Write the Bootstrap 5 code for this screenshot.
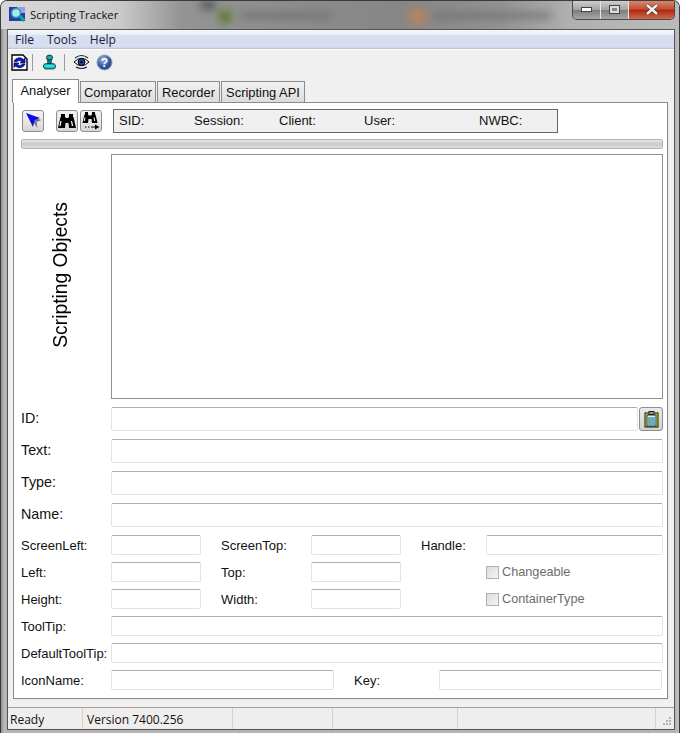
<!DOCTYPE html>
<html lang="en">
<head>
<meta charset="utf-8">
<title>Scripting Tracker</title>
<link href="https://cdn.jsdelivr.net/npm/bootstrap@5.3.0/dist/css/bootstrap.min.css" rel="stylesheet">
<style>
html,body{margin:0;height:733px;width:680px;overflow:hidden;background:#fff}
body{font-family:"Liberation Sans",Arial,sans-serif;font-size:13px;color:#111}
.wnd{width:680px;height:733px;position:relative;overflow:hidden;display:flex;flex-direction:column;background:linear-gradient(90deg,#8e8e8e 0,#b9b9b9 3px,#b4b4b4 6px,#b4b4b4 674px,#c4c4c4 679px);border:1px solid #3b3b3b;border-width:1px 1px 0 1px;border-radius:7px 7px 0 0;padding:0 4px 3px 6px}
.ttl{height:28px;flex:none;display:flex;align-items:center;gap:4px;margin:0 -4px 0 -6px;padding-left:8px;position:relative;overflow:hidden;background:linear-gradient(90deg,#d6d6d6 0,#d2d2d2 70px,#c9c9c9 120px,#949494 180px,#868686 400px,#929292 500px,#b0b0b0 570px,#bbb 680px);font:11.3px "Open Sans",sans-serif;color:#111}
.ttl .nm{position:relative;margin-top:-2px}
.ttl>svg{margin-top:-2px;position:relative}
.smear{position:absolute;filter:blur(4px);pointer-events:none}
.s1{left:217px;top:9px;width:14px;height:13px;border-radius:50%;background:#5a7a28}
.s2{left:409px;top:8px;width:15px;height:15px;background:#bd825a}
.s3{left:240px;top:12px;width:90px;height:5px;background:#6b6b6b}
.s4{left:432px;top:12px;width:118px;height:5px;background:#6d6d6d}
.s5{left:200px;top:0;width:14px;height:8px;background:#505050}
.caps{position:absolute;right:4px;top:-1px;display:flex;height:20px;border:1px solid #4a4a4a;border-top:0;border-radius:0 0 5px 5px;overflow:hidden}
.cap{width:28px;display:flex;align-items:center;justify-content:center;background:linear-gradient(#d2d2d2,#a5a5a5 50%,#7d7d7d 55%,#a8a8a8);border-right:1px solid #e6e6e6}
.cap.cx{width:45px;border:0;background:linear-gradient(#dc8d76,#c4523a 45%,#b02a10 55%,#cf6a4d)}
.client{flex:1;min-height:0;display:flex;flex-direction:column;background:#f0f0f0;border:1px solid #555}
.mnu{height:20px;flex:none;display:flex;gap:13px;padding:0 0 0 7px;align-items:center;background:linear-gradient(#f4f7fc 0,#e9edf7 25%,#d6deef 30%,#d6deef 90%,#b9bfca 100%);font:12px "Open Sans",sans-serif;color:#1b1b3a;border-bottom:1px solid #fff}
.tbar{height:27px;flex:none;display:flex;align-items:center;padding:0 0 3px 3px}
.sep{width:1px;height:17px;background:#9b9b9b}
.tabsrow{flex:none;height:25px;padding:0 0 0 4px;align-items:flex-end;border:0;flex-wrap:nowrap;gap:1px;--bs-nav-tabs-border-width:0}
.tabsrow .nav-link{display:block;height:21px;padding:0;text-align:center;font:12.9px/22px "Liberation Sans",sans-serif;color:#111;background:linear-gradient(#f2f2f2,#dcdcdc);border:1px solid #8b8b8b;border-bottom:0;border-radius:0;margin:0;white-space:nowrap}
.tabsrow .nav-link.active{height:24px;background:#fff;line-height:21px;color:#111;border-color:#8b8b8b;position:relative;z-index:1;margin-bottom:-1px}
.tw1{width:67px}.tw2{width:76px}.tw3{width:63px}.tw4{width:84px}
.panel{flex:none;height:597px;margin-left:5px;margin-right:6px;background:#fff;border:1px solid #8b8b8b;padding:0 4px 0 7px;box-shadow:1px 1px 0 #e8e8e8}
.hdr{height:35px;display:flex;align-items:center;padding-left:1px}
.tool{width:22px;height:22px;flex:none;padding:0;border:1px solid #8d8d8d;border-radius:3px;background:linear-gradient(#f3f3f3,#e6e6e6 50%,#d6d6d6);display:flex;align-items:center;justify-content:center;--bs-btn-border-color:#8d8d8d}
.info{margin-left:11px;width:445px;height:24px;flex:none;border:1px solid #666;background:#f0f0f0;display:flex;align-items:center;padding-left:5px;font-size:13px}
.info span{flex:none}
.prog{height:10px;margin:1px 0 5px;border:1px solid #b5b5b5;border-radius:2px;background:linear-gradient(#e6e6e6,#c9c9c9 50%,#dedede)}
.tree-row{display:flex;height:245px;margin-bottom:8px}
.vlab{width:90px;flex:none;display:flex;align-items:center;justify-content:center}
.vlab span{writing-mode:vertical-rl;transform:rotate(180deg);font-size:19.3px;color:#000;margin-right:10px;margin-top:-3px;white-space:nowrap}
.tree{flex:1;border:1px solid #8f8f8f;background:#fff}
.frow{display:flex;align-items:center;white-space:nowrap}
.big{height:24px;margin-bottom:8px;font-size:14.3px}
.big .lb{margin-top:-1px}
.sm{height:20px;margin-bottom:7px;font-size:13px}
.sm .lb{margin-top:1px}
.lb{flex:none;width:90px;color:#111;margin:0}
.fld,.fld:disabled{height:100%;min-height:0;border-radius:2px;border:1px solid #dfe3ea;border-top-color:#abadb3;border-left-color:#e2e3ea;background:#fff;padding:0 3px;box-shadow:none}
.w90{flex:none;width:90px}
.gap20{margin-left:20px}
.tool.clipb{margin-left:1px;width:24px;height:24px;background:linear-gradient(#e9e9e9,#d2d2d2)}
.chk{margin-left:85px;margin-top:1px;display:flex;align-items:center;color:#6d6d6d;gap:3px;font-size:12.7px}
.chk span{margin-top:1px}
.chk input,.chk input:disabled{width:13px;height:13px;margin:0;border:1px solid #b0b0b0;border-radius:0;background:linear-gradient(135deg,#dcdcdc,#f4f4f4);opacity:1;float:none}
.stat{flex:none;margin-top:auto;height:22px;display:flex;background:#f0eeed;border-top:1px solid #9f9f9f;font:12px "Open Sans",sans-serif;align-items:stretch;position:relative}
.stat>div{border-right:1px solid #d4d2d1;padding:4px 0 0 2px;line-height:16px}
.grip{position:absolute;right:2px;bottom:1px}
</style>
</head>
<body>
<div class="wnd">
  <div class="ttl">
    <div class="smear s5"></div><div class="smear s1"></div><div class="smear s3"></div><div class="smear s2"></div><div class="smear s4"></div>
    <svg width="17" height="17" viewBox="0 0 17 17"><rect x="0" y="1" width="16" height="14" fill="#2f3aa6"/><rect x="8" y="1" width="8" height="6" fill="#9a9de6"/><path d="M11 10l4.500 5" stroke="#08a8a8" stroke-width="3"/><circle cx="7" cy="7" r="4.500" fill="#a8e8ee" stroke="#14a0a6" stroke-width="1.500"/></svg>
    <span class="nm">Scripting Tracker</span>
    <div class="caps">
      <div class="cap"><svg width="12" height="6" viewBox="0 0 12 6"><rect x=".5" y=".5" width="10" height="4" fill="#fff" stroke="#444"/></svg></div>
      <div class="cap"><svg width="12" height="10" viewBox="0 0 12 10"><rect x=".5" y=".5" width="10" height="8" fill="#ddd" stroke="#444"/><rect x="3" y="3" width="5" height="3" fill="#888"/></svg></div>
      <div class="cap cx"><svg width="14" height="11" viewBox="0 0 14 11"><path d="M2 1l10 9M12 1L2 10" stroke="#333" stroke-width="3.6"/><path d="M2 1l10 9M12 1L2 10" stroke="#f1f1f1" stroke-width="2.4"/></svg></div>
    </div>
  </div>
  <div class="client">
    <div class="mnu"><span>File</span><span>Tools</span><span>Help</span></div>
    <div class="tbar">
      <svg width="17" height="17" viewBox="0 0 17 17"><path d="M1 1h11l4 4v11H1z" fill="#fff" stroke="#000" stroke-width="1.400"/><path d="M3 7.500a5.500 5 0 0 1 9.500-2L14 4v5H9l1.500-1.500a3 2.500 0 0 0-5 .5zM14 10a5.500 5 0 0 1-9.500 2L3 13.500V9h5L6.500 10.500a3 2.500 0 0 0 5-.5z" fill="#0a18c8" stroke="#00005a" stroke-width=".7"/></svg>
      <div class="sep ms-1"></div>
      <svg style="margin-left:10px" width="13" height="16" viewBox="0 0 15 17"><ellipse cx="7.500" cy="3.500" rx="3.500" ry="3" fill="#16b0b0" stroke="#022" stroke-width="1"/><path d="M5.500 6h4v4.500h-4z" fill="#0a9090" stroke="#022" stroke-width=".9"/><path d="M3 10.500h9c1.500 0 2.500 1.500 2.500 3s-1 3-3 3h-8c-2 0-3-1.500-3-3s1-3 2.500-3z" fill="#12c8c8" stroke="#022"/><path d="M3 13h9" stroke="#7ff" stroke-width="1"/></svg>
      <div class="sep" style="margin-left:8px"></div>
      <svg style="margin-left:8px" width="17" height="16" viewBox="0 0 17 16"><path d="M1 8q7.500-7.500 15 0q-7.500 7.500-15 0z" fill="#fff" stroke="#000"/><circle cx="8.500" cy="8" r="3.500" fill="#1a4fa8" stroke="#000"/><circle cx="8.500" cy="8" r="1.300" fill="#000"/><path d="M2 4q6.500-5 13 0M3 13q5.500 3 11 0" fill="none" stroke="#123" stroke-width="1.100"/></svg>
      <svg style="margin-left:6px" width="17" height="17" viewBox="0 0 17 17"><defs><radialGradient id="hg" cx=".4" cy=".3"><stop offset="0" stop-color="#9db7e8"/><stop offset="1" stop-color="#2c4f9c"/></radialGradient></defs><circle cx="8.500" cy="8.500" r="7.500" fill="url(#hg)" stroke="#9a9fae"/><text x="8.500" y="13" text-anchor="middle" font-family="Liberation Sans" font-weight="700" font-size="12" fill="#fff">?</text></svg>
    </div>
    <ul class="nav nav-tabs tabsrow">
      <li class="nav-item"><span class="nav-link active tw1">Analyser</span></li>
      <li class="nav-item"><span class="nav-link tw2">Comparator</span></li>
      <li class="nav-item"><span class="nav-link tw3">Recorder</span></li>
      <li class="nav-item"><span class="nav-link tw4">Scripting API</span></li>
    </ul>
    <div class="panel">
      <div class="hdr">
        <button class="btn tool" type="button" aria-label="Select"><svg width="17" height="17" viewBox="0 0 17 17"><path d="M3 3l13 4-5 2 1 6z" fill="#777" transform="translate(.5 1)"/><path d="M1 1l14 5-5.500 2L8 15z" fill="#0a0af0"/></svg></button>
        <button class="btn tool" style="margin-left:12px" type="button" aria-label="Find"><svg width="18" height="16" viewBox="0 0 18 16"><g fill="#000"><rect x="3" y="1" width="4" height="4"/><rect x="11" y="1" width="4" height="4"/><path d="M2.500 4h5v1h3V4h5L18 15h-7l-.5-5h-3L7 15H0z"/></g><path d="M3 8l-1 5M13.500 8l1 5" stroke="#fff" stroke-width="1.200"/></svg></button>
        <button class="btn tool" style="margin-left:2px" type="button" aria-label="Find next"><svg width="18" height="18" viewBox="0 0 18 18"><g fill="#000"><rect x="3" y="0" width="3" height="3"/><rect x="10" y="0" width="3" height="3"/><path d="M2.500 2.500h4v1h3v-1h4L15.500 11H10l-.5-4h-3L6 11H.5z"/></g><path d="M3 5.500l-.7 3.500M12 5.500l.7 3.500" stroke="#fff"/><path d="M3 15h1.500M6 15h1.500M9 15h6" stroke="#000"/><path d="M13 12.500l4.500 2.500-4.500 2.500z"/></svg></button>
        <div class="info"><span style="width:75px">SID:</span><span style="width:85px">Session:</span><span style="width:85px">Client:</span><span style="width:115px">User:</span><span>NWBC:</span></div>
      </div>
      <div class="prog"></div>
      <div class="tree-row">
        <div class="vlab"><span>Scripting Objects</span></div>
        <div class="tree"></div>
      </div>
      <div class="frow big"><label class="lb">ID:</label><input class="form-control fld" disabled><button class="btn tool clipb" type="button" aria-label="Copy"><svg width="15" height="17" viewBox="0 0 15 17"><rect x="1" y="2" width="13" height="14" fill="#f0e60a" stroke="#111"/><rect x="3" y="4" width="9" height="11" fill="#d0f7f7" stroke="#135"/><path d="M4 7h7M4 9h7M4 11h7M4 13h7" stroke="#067" stroke-width="1"/><rect x="5" y=".5" width="5" height="3" fill="#999" stroke="#222"/></svg></button></div>
      <div class="frow big"><label class="lb">Text:</label><input class="form-control fld" disabled></div>
      <div class="frow big"><label class="lb">Type:</label><input class="form-control fld" disabled></div>
      <div class="frow big"><label class="lb">Name:</label><input class="form-control fld" disabled></div>
      <div class="frow sm"><label class="lb">ScreenLeft:</label><input class="form-control fld w90" disabled><label class="lb gap20">ScreenTop:</label><input class="form-control fld w90" disabled><label class="lb gap20" style="width:65px">Handle:</label><input class="form-control fld" disabled></div>
      <div class="frow sm"><label class="lb">Left:</label><input class="form-control fld w90" disabled><label class="lb gap20">Top:</label><input class="form-control fld w90" disabled><div class="chk"><input class="form-check-input" type="checkbox" disabled><span>Changeable</span></div></div>
      <div class="frow sm"><label class="lb">Height:</label><input class="form-control fld w90" disabled><label class="lb gap20">Width:</label><input class="form-control fld w90" disabled><div class="chk"><input class="form-check-input" type="checkbox" disabled><span>ContainerType</span></div></div>
      <div class="frow sm"><label class="lb">ToolTip:</label><input class="form-control fld" disabled></div>
      <div class="frow sm"><label class="lb">DefaultToolTip:</label><input class="form-control fld" disabled></div>
      <div class="frow sm"><label class="lb">IconName:</label><input class="form-control fld" style="flex:none;width:223px" disabled><label class="lb gap20" style="width:85px">Key:</label><input class="form-control fld" style="margin-right:1px" disabled></div>
    </div>
    <div class="stat">
      <div style="width:75px">Ready</div>
      <div style="width:150px;padding-left:4px">Version 7400.256</div>
      <div style="width:100px"></div>
      <div style="width:125px"></div>
      <div style="width:198px"></div>
      <svg class="grip" width="12" height="12" viewBox="0 0 12 12" fill="#b5b3b2"><rect x="9" y="1" width="2" height="2"/><rect x="6" y="4" width="2" height="2"/><rect x="9" y="4" width="2" height="2"/><rect x="3" y="7" width="2" height="2"/><rect x="6" y="7" width="2" height="2"/><rect x="9" y="7" width="2" height="2"/></svg>
    </div>
  </div>
</div>
<script src="https://cdn.jsdelivr.net/npm/bootstrap@5.3.0/dist/js/bootstrap.bundle.min.js"></script>
</body>
</html>
